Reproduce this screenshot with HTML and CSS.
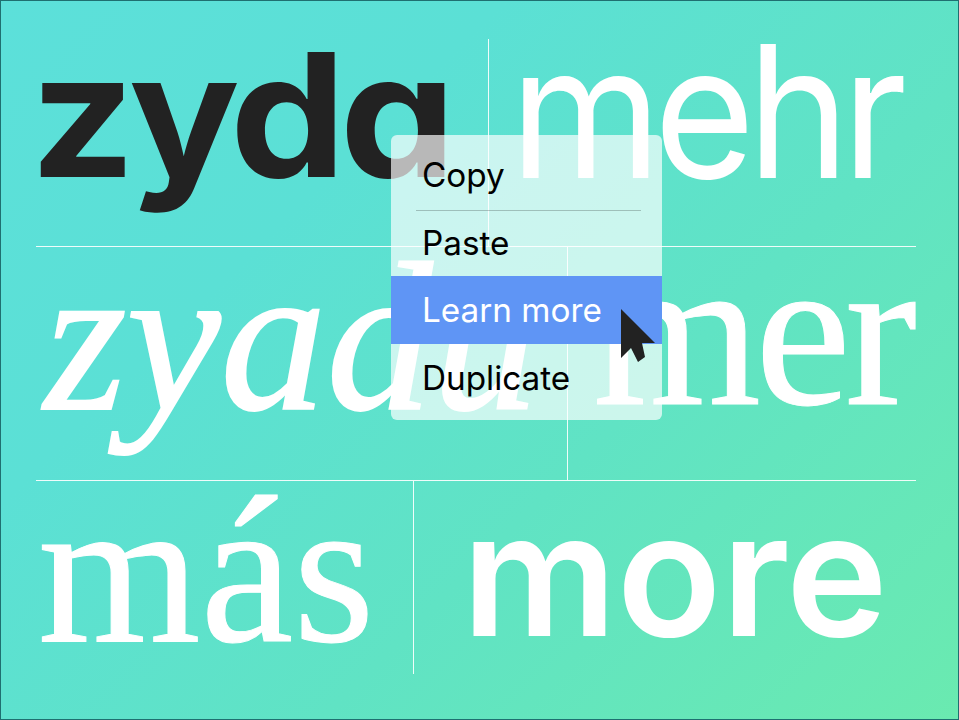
FILE: index.html
```html
<!DOCTYPE html>
<html lang="en">
<head>
  <meta charset="UTF-8" />
  <title>Type specimen</title>
  <link rel="stylesheet" href="styles.css">
</head>
<body>
  <div class="poster">
    <div class="row row-top">
      <div class="cell"><span class="word word-logo">zyda</span></div>
      <div class="cell"><span class="word word-mehr">mehr</span></div>
    </div>
    <div class="row row-middle">
      <div class="cell"><span class="word word-italic">zyadu</span></div>
      <div class="cell"><span class="word word-mer">mer</span></div>
    </div>
    <div class="row row-bottom">
      <div class="cell"><span class="word word-mas">más</span></div>
      <div class="cell"><span class="word word-more">more</span></div>
    </div>

    <ul class="menu">
      <li class="menu-item menu-item-first">Copy</li>
      <li class="menu-item">Paste</li>
      <li class="menu-item active">Learn more</li>
      <li class="menu-item">Duplicate</li>
    </ul>

    <svg class="cursor" width="36" height="54" viewBox="0 0 36 54">
      <path d="M1 1 L35 35 L22 35 L25 49 L18 54 L11 40 L1 50 Z" fill="#222"/>
    </svg>
  </div>
</body>
</html>
```

FILE: styles.css
```css
* {
  box-sizing: border-box;
}

html, body {
  margin: 0;
  height: 100%;
}

.poster {
  position: relative;
  width: 959px;
  height: 720px;
  padding: 38px 42px 0 35px;
  overflow: hidden;
  border: 1px solid #1f6f70;
  background: linear-gradient(135deg, #5ce0da 0%, #5be0d5 30%, #60e3c4 62%, #6aeab0 100%);
  color: #fff;
}

.row {
  display: grid;
  grid-template-rows: minmax(0, 1fr);
  border-bottom: 1px solid rgba(255, 255, 255, 0.9);
}

.row-top {
  grid-template-columns: 453px 1fr;
  height: 208px;
}

.row-middle {
  grid-template-columns: 532px 1fr;
  height: 234px;
}

.row-bottom {
  grid-template-columns: 378px 1fr;
  height: 193px;
  border-bottom: none;
}

.cell {
  min-width: 0;
  white-space: nowrap;
}

.cell:first-child {
  border-right: 1px solid rgba(255, 255, 255, 0.9);
}

.word {
  display: block;
  line-height: 1;
}

.word-logo {
  margin: -11px 0 0 -6px;
  font-family: Inter, sans-serif;
  font-size: 172px;
  font-weight: 700;
  font-feature-settings: "cv11";
  letter-spacing: -6px;
  color: #222;
  transform: scaleX(1.07);
  transform-origin: left;
}

.word-mehr {
  margin: -20px 0 0 21px;
  font-family: Inter, sans-serif;
  font-size: 184px;
  font-weight: 400;
  letter-spacing: -8px;
  transform: scaleX(0.94);
  transform-origin: left;
}

.word-italic {
  margin: -15px 0 0 8px;
  font-family: "Liberation Serif", serif;
  font-size: 212px;
  font-style: italic;
  -webkit-text-stroke: 2px #fff;
}

.word-mer {
  margin: -23px 0 0 25px;
  font-family: "Liberation Serif", serif;
  font-size: 216px;
  letter-spacing: -6px;
  -webkit-text-stroke: 1px #fff;
}

.word-mas {
  margin: -15px 0 0 2px;
  font-family: "Liberation Serif", serif;
  font-size: 209px;
  -webkit-text-stroke: 1px #fff;
}

.word-more {
  margin: 6px 0 0 48px;
  font-family: Inter, sans-serif;
  font-size: 172px;
  font-weight: 600;
}

.menu {
  position: absolute;
  left: 390px;
  top: 134px;
  width: 271px;
  height: 285px;
  margin: 0;
  padding: 6px 0 8px;
  list-style: none;
  border-radius: 6px;
  background: rgba(255, 255, 255, 0.68);
  font-family: Inter, sans-serif;
  font-size: 33.3px;
  color: #000;
}

.menu-item {
  position: relative;
  height: 68px;
  padding-left: 31px;
  line-height: 68px;
}

.menu-item-first::after {
  content: "";
  position: absolute;
  left: 25px;
  right: 21px;
  bottom: -2px;
  height: 1px;
  background: rgba(0, 0, 0, 0.22);
}

.menu-item.active {
  margin-top: -1px;
  background: #5f95f5;
  color: #fff;
}

.cursor {
  position: absolute;
  left: 619px;
  top: 307px;
}
```
